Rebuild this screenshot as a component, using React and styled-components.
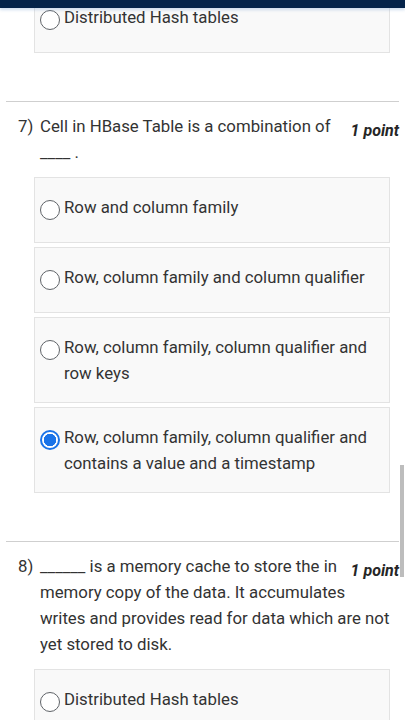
import React from "react"
import styled, { createGlobalStyle } from "styled-components"

const GlobalStyle = createGlobalStyle`
  html, body {
    margin: 0;
    padding: 0;
    background: #ffffff;
    overflow: hidden;
  }
  body {
    font-family: Roboto, "Noto Sans", "Liberation Sans", sans-serif;
    color: #333333;
  }
`

const App = () => {
  return (
    <>
      <GlobalStyle />
      <AppBar />
      <Page>
        <Section $first>
          <Options>
            <Option text="Distributed Hash tables" />
          </Options>
        </Section>

        <Section>
          <TitleRow>
            <Num>7)</Num>
            <Title>
              <Points>1 point</Points>
              Cell in HBase Table is a combination of ____ .
            </Title>
          </TitleRow>
          <Options>
            <Option text="Row and column family" />
            <Option text="Row, column family and column qualifier" />
            <Option text="Row, column family, column qualifier and row keys" />
            <Option
              checked
              text="Row, column family, column qualifier and contains a value and a timestamp"
            />
          </Options>
        </Section>

        <Section>
          <TitleRow>
            <Num>8)</Num>
            <Title>
              <Points>1 point</Points>
              ______ is a memory cache to store the in memory copy of the data. It
              accumulates writes and provides read for data which are not yet stored to
              disk.
            </Title>
          </TitleRow>
          <Options>
            <Option text="Distributed Hash tables" />
          </Options>
        </Section>
      </Page>
      <ScrollThumb />
    </>
  )
}

const Option = ({ text, checked }) => (
  <OptionBox>
    <Radio $checked={checked} />
    <OptionText>{text}</OptionText>
  </OptionBox>
)

export default App

const AppBar = styled.div`
  position: fixed;
  top: 0;
  left: 0;
  right: 0;
  height: 8px;
  background: #04234a;
  box-shadow: 0 2px 3px rgba(120, 160, 210, 0.35);
  z-index: 10;
`

const Page = styled.div`
  padding: 0 6px;
  margin-top: -13px;
`

const Section = styled.div`
  border-top: ${(p) => (p.$first ? "none" : "1px solid #cfcfcf")};
  padding: ${(p) => (p.$first ? "0" : "11px")} 0 48px;
`

const TitleRow = styled.div`
  display: flex;
  font-size: 16.8px;
  line-height: 26px;
  margin-bottom: 12px;
`

const Num = styled.div`
  width: 22px;
  padding-left: 12px;
  flex-shrink: 0;
`

const Title = styled.div`
  flex: 1;
`

const Points = styled.span`
  float: right;
  font-weight: 700;
  font-style: italic;
  font-size: 16px;
  line-height: 20px;
  margin: 8px 0 0 4px;
  color: #262626;
`

const Options = styled.div`
  display: flex;
  flex-direction: column;
  gap: 4px;
  margin: 0 9px 0 28px;
`

const OptionBox = styled.div`
  display: flex;
  align-items: flex-start;
  gap: 4px;
  padding: 16px 10px 16px 5px;
  background: #f9f9f9;
  border: 1px solid #e3e3e3;
  font-size: 16.8px;
  line-height: 26px;
`

const Radio = styled.span`
  flex-shrink: 0;
  box-sizing: border-box;
  width: 20px;
  height: 20px;
  margin: 6px 0;
  border-radius: 50%;
  border: ${(p) => (p.$checked ? "2px solid #1a73e8" : "1.3px solid #5f6368")};
  background: ${(p) =>
    p.$checked ? "radial-gradient(circle, #1a73e8 0 6px, #ffffff 6.5px)" : "#ffffff"};
`

const OptionText = styled.span`
  flex: 1;
`

const ScrollThumb = styled.div`
  position: fixed;
  right: 1px;
  top: 465px;
  width: 4px;
  height: 112px;
  background: #bdbdbd;
`
